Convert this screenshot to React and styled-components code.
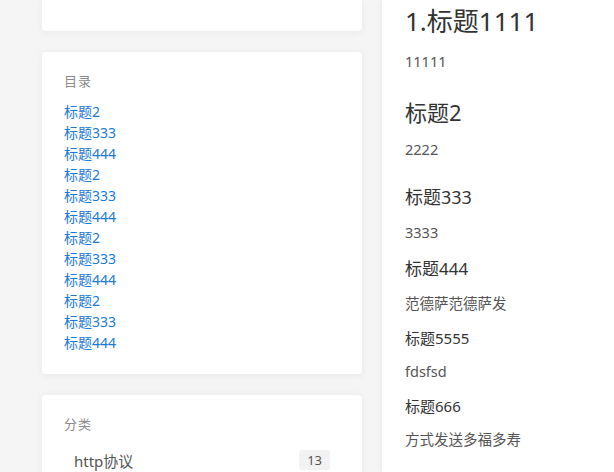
import React from 'react';
import styled, { createGlobalStyle } from 'styled-components';

const GlobalStyle = createGlobalStyle`
  html, body {
    margin: 0;
    padding: 0;
    background: #f5f5f5;
    font-family: "Noto Sans", "Noto Sans CJK SC", sans-serif;
    overflow: hidden;
  }
`

const Page = styled.div`
  display: flex;
  align-items: flex-start;
  gap: 20px;
  height: 472px;
  padding-left: 42px;
  box-sizing: border-box;
`

const Sidebar = styled.aside`
  width: 320px;
  flex: none;
  display: flex;
  flex-direction: column;
  gap: 21px;
`

const Card = styled.section`
  background: #fff;
  border-radius: ${p => p.$cut ? '0 0 4px 4px' : '4px'};
  box-shadow: 0 1px 8px rgba(0, 0, 0, 0.06);
  padding: ${p => p.$cut ? '0' : '19px 22px 21px'};
  height: ${p => p.$height || 'auto'};
  box-sizing: border-box;
`

const CardTitle = styled.div`
  font-size: 13px;
  line-height: 20px;
  color: #8a8a8a;
  letter-spacing: 1px;
`

const TocList = styled.ul`
  list-style: none;
  margin: 10px 0 0;
  padding: 0;
`

const TocLink = styled.a`
  display: block;
  font-size: 14px;
  line-height: 21px;
  color: #1a7ad8;
  text-decoration: none;
`

const CategoryRow = styled.div`
  display: flex;
  align-items: center;
  justify-content: space-between;
  height: 36px;
  margin-top: 8px;
  padding: 0 10px;
  font-size: 15px;
  color: #555;
`

const Badge = styled.span`
  display: inline-flex;
  align-items: center;
  height: 20px;
  padding: 0 8px;
  border-radius: 3px;
  background: #f2f2f2;
  font-size: 13px;
  color: #555;
`

const Article = styled.main`
  flex: 1;
  align-self: stretch;
  background: #fff;
  box-shadow: -2px 0 6px rgba(0, 0, 0, 0.04);
  padding: 3px 20px 0 23px;
  color: #333;
`

const sizes = {
  1: { size: 26, lh: 36, top: 0 },
  2: { size: 22, lh: 30, top: 24 },
  3: { size: 18, lh: 26, top: 23 },
  4: { size: 17, lh: 24, top: 13 },
  5: { size: 15, lh: 22, top: 12 },
  6: { size: 15, lh: 22, top: 12 },
}

const Heading = styled.div`
  font-size: ${p => sizes[p.$level].size}px;
  line-height: ${p => sizes[p.$level].lh}px;
  margin: ${p => sizes[p.$level].top}px 0 10px;
  font-weight: 400;
  color: #333;
`

const Para = styled.p`
  margin: 0;
  font-size: 14.5px;
  line-height: 24px;
  color: #555;
`

const toc = ['标题2', '标题333', '标题444', '标题2', '标题333', '标题444', '标题2', '标题333', '标题444', '标题2', '标题333', '标题444']

const sections = [
  { level: 1, title: '1.标题1111', text: '11111' },
  { level: 2, title: '标题2', text: '2222' },
  { level: 3, title: '标题333', text: '3333' },
  { level: 4, title: '标题444', text: '范德萨范德萨发' },
  { level: 5, title: '标题5555', text: 'fdsfsd' },
  { level: 6, title: '标题666', text: '方式发送多福多寿' },
]

const App = () => {
  return (
    <Page>
      <GlobalStyle />
      <Sidebar>
        <Card $cut $height="31px" />
        <Card>
          <CardTitle>目录</CardTitle>
          <TocList>
            {toc.map((item, i) => (
              <li key={i}><TocLink href="#">{item}</TocLink></li>
            ))}
          </TocList>
        </Card>
        <Card>
          <CardTitle>分类</CardTitle>
          <CategoryRow>
            <span>http协议</span>
            <Badge>13</Badge>
          </CategoryRow>
        </Card>
      </Sidebar>
      <Article>
        {sections.map((s, i) => (
          <React.Fragment key={i}>
            <Heading $level={s.level}>{s.title}</Heading>
            <Para>{s.text}</Para>
          </React.Fragment>
        ))}
      </Article>
    </Page>
  );
}

export default App;
